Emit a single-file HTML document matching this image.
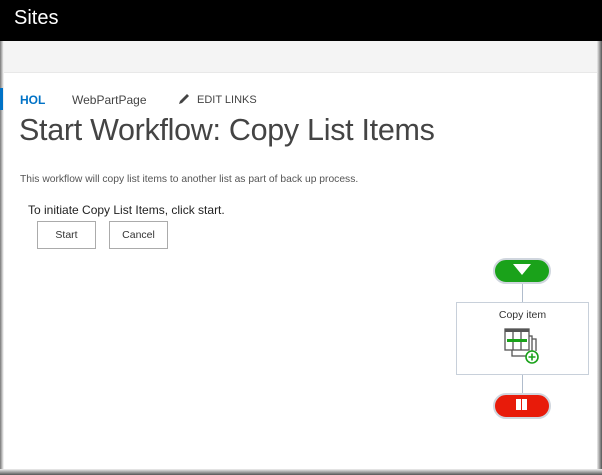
<!DOCTYPE html>
<html><head><style>
body{margin:0;width:602px;height:475px;overflow:hidden;background:#fff;font-family:"Liberation Sans",sans-serif;position:relative}
.a{position:absolute}
</style></head><body>
<div class="a" style="left:0;top:0;width:602px;height:41px;background:#000"></div>
<div class="a" style="left:14px;top:7px;color:#fff;font-size:20px">Sites</div>
<div class="a" style="left:0;top:41px;width:602px;height:31px;background:#f4f4f4;border-bottom:1px solid #e8e8e8"></div>
<div class="a" style="left:0;top:41px;width:4px;height:434px;background:linear-gradient(90deg,#777,#ccc 60%,#fff)"></div>
<div class="a" style="left:597px;top:41px;width:5px;height:434px;background:linear-gradient(90deg,#eee,#555)"></div>
<div class="a" style="left:0;top:469px;width:602px;height:6px;background:linear-gradient(180deg,#f0f0f0,#555)"></div>
<div class="a" style="left:0;top:88px;width:3px;height:22px;background:#0072c6"></div>
<div class="a" style="left:20px;top:93px;font-size:12px;color:#0072c6;font-weight:bold">HOL</div>
<div class="a" style="left:72px;top:93px;font-size:12px;color:#444">WebPartPage</div>
<svg class="a" style="left:178px;top:93px" width="12" height="12" viewBox="0 0 12 12"><path d="M1 11 L2 8 L9 1 L11 3 L4 10 Z" fill="#444"/></svg>
<div class="a" style="left:197px;top:94px;font-size:11px;color:#444">EDIT LINKS</div>
<div class="a" style="left:19px;top:113px;font-size:30.5px;color:#444;letter-spacing:-0.3px">Start Workflow: Copy List Items</div>
<div class="a" style="left:20px;top:174px;font-size:10.3px;color:#555">This workflow will copy list items to another list as part of back up process.</div>
<div class="a" style="left:28px;top:203px;font-size:12px;color:#222">To initiate Copy List Items, click start.</div>
<div class="a" style="left:37px;top:221px;width:57px;height:26px;border:1px solid #ababab;font-size:10.5px;color:#333;text-align:center;line-height:26px">Start</div>
<div class="a" style="left:109px;top:221px;width:57px;height:26px;border:1px solid #ababab;font-size:10.5px;color:#333;text-align:center;line-height:26px">Cancel</div>
<div class="a" style="left:522px;top:283px;width:1px;height:110px;background:#b0bccc"></div>
<div class="a" style="left:493px;top:258px;width:54px;height:22px;border:2px solid #d0d6de;border-radius:14px;background:#1aa21a"></div>
<svg class="a" style="left:513px;top:264px" width="18" height="12"><path d="M0 0 H18 L9 11 Z" fill="#fff"/></svg>
<div class="a" style="left:456px;top:302px;width:131px;height:71px;border:1px solid #c8d0da;background:#fff"></div>
<div class="a" style="left:456px;top:309px;width:133px;text-align:center;font-size:10.5px;color:#333">Copy item</div>
<svg class="a" style="left:503px;top:327px" width="40" height="40" viewBox="0 0 40 40">
<rect x="9" y="9" width="20" height="20" fill="none" stroke="#555" stroke-width="1.3"/>
<path d="M29 12 H33 V24" fill="none" stroke="#555" stroke-width="1.3"/>
<rect x="2" y="2" width="24" height="21" fill="#fff" stroke="#555" stroke-width="1.3"/>
<rect x="2" y="2" width="24" height="3" fill="#555"/>
<path d="M10 5 V23 M18 5 V23" stroke="#555" stroke-width="1.3"/>
<rect x="4" y="12" width="20" height="3" fill="#1aa21a"/>
<circle cx="29" cy="30" r="6" fill="#fff" stroke="#1aa21a" stroke-width="1.6"/>
<path d="M29 26.5 V33.5 M25.5 30 H32.5" stroke="#1aa21a" stroke-width="1.6"/>
</svg>
<div class="a" style="left:493px;top:393px;width:54px;height:22px;border:2px solid #d0d6de;border-radius:14px;background:#e81b0a"></div>
<div class="a" style="left:516px;top:399px;width:11px;height:11px;background:#fff"></div>
<div class="a" style="left:521px;top:399px;width:1px;height:11px;background:#e81b0a"></div>
</body></html>
